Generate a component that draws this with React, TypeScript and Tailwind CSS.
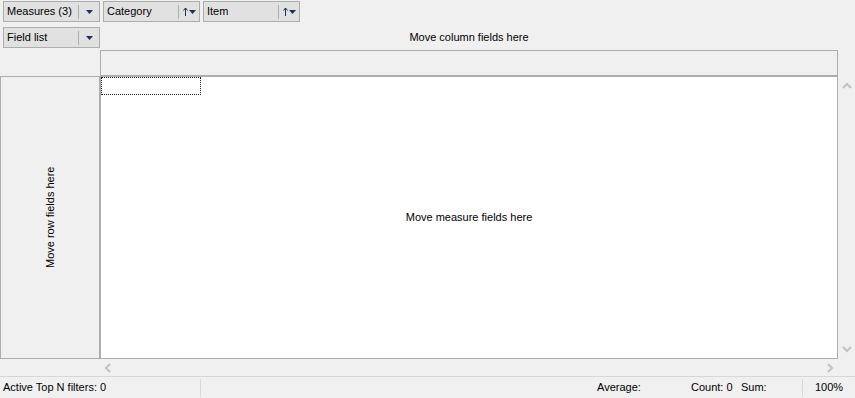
import React from "react";

const Tri = () => (
  <svg width="7" height="4" viewBox="0 0 7 4" className="block">
    <path d="M0 0H7L3.5 4Z" fill="#1f2f55" />
  </svg>
);

const UpArrow = () => (
  <svg width="5" height="9" viewBox="0 0 5 9" className="block">
    <path d="M2.5 1V9" stroke="#1f2f55" strokeWidth="1" />
    <path d="M0.5 3.5L2.5 1L4.5 3.5" stroke="#1f2f55" strokeWidth="1" fill="none" />
  </svg>
);

function FieldButton({ label, sort }: { label: string; sort?: boolean }) {
  return (
    <div className="w-[97px] h-[21px] border border-[#adadad] bg-[#e1e1e1] flex items-center">
      <span className="flex-1 pl-[3px] leading-none truncate">{label}</span>
      <div className="h-[14px] w-px bg-[#adadad]" />
      <div className="w-[20px] flex items-center justify-center gap-[1px]">
        {sort && <UpArrow />}
        <Tri />
      </div>
    </div>
  );
}

const Chevron = ({ dir }: { dir: "up" | "down" | "left" | "right" }) => {
  const d =
    dir === "up"
      ? "M1 6L5 2L9 6"
      : dir === "down"
      ? "M1 2L5 6L9 2"
      : dir === "left"
      ? "M6 1L2 5L6 9"
      : "M2 1L6 5L2 9";
  const w = dir === "up" || dir === "down" ? 10 : 8;
  const h = dir === "up" || dir === "down" ? 8 : 10;
  return (
    <svg width={w} height={h} viewBox={`0 0 ${w} ${h}`} className="block">
      <path d={d} stroke="#c2c2c2" strokeWidth="2" fill="none" />
    </svg>
  );
};

export default function App() {
  return (
    <div
      className="w-[855px] h-[398px] bg-[#f0f0f0] text-[11px] text-black flex flex-col overflow-hidden"
      style={{ fontFamily: '"Liberation Sans", Arial, sans-serif' }}
    >
      {/* toolbar rows */}
      <div className="h-[50px] flex flex-col">
        <div className="flex gap-[3px] pl-[3px] pt-[1px]">
          <FieldButton label="Measures (3)" />
          <FieldButton label="Category" sort />
          <FieldButton label="Item" sort />
        </div>
        <div className="flex pl-[3px] pt-[5px]">
          <FieldButton label="Field list" />
          <div className="flex-1 flex items-center justify-center pr-[18px] pl-[1px]">
            Move column fields here
          </div>
        </div>
      </div>

      {/* column header row */}
      <div className="h-[26px] flex">
        <div className="w-[100px]" />
        <div className="w-[738px] border border-[#adadad] bg-[#f0f0f0]" />
        <div className="flex-1" />
      </div>

      {/* body */}
      <div className="h-[283px] flex">
        <div className="w-[100px] border border-[#adadad] flex items-center justify-center">
          <span className="-rotate-90 whitespace-nowrap">Move row fields here</span>
        </div>
        <div className="w-[738px] border-t border-r border-b border-l border-[#adadad] bg-white relative flex items-center justify-center">
          <div className="absolute left-0 top-0 w-[100px] h-[18px] border border-dotted border-[#222]" />
          <span className="-mt-[1px]">Move measure fields here</span>
        </div>
        <div className="flex-1 flex flex-col items-center justify-between pt-[6px] pb-[6px]">
          <Chevron dir="up" />
          <Chevron dir="down" />
        </div>
      </div>

      {/* horizontal scrollbar */}
      <div className="h-[17px] flex">
        <div className="w-[100px]" />
        <div className="w-[738px] flex items-center justify-between px-[4px]">
          <Chevron dir="left" />
          <Chevron dir="right" />
        </div>
      </div>

      {/* status bar */}
      <div className="flex-1 border-t border-[#d7d7d7] flex items-center">
        <div className="w-[201px] h-[18px] border-r border-[#d7d7d7] pl-[3px] flex items-center">
          Active Top N filters: 0
        </div>
        <div className="flex-1" />
        <div className="w-[94px]">Average:</div>
        <div className="w-[50px]">Count: 0</div>
        <div className="w-[61px]">Sum:</div>
        <div className="w-[53px] h-[18px] border-l border-[#d7d7d7] pl-[12px] flex items-center">
          100%
        </div>
      </div>
    </div>
  );
}
